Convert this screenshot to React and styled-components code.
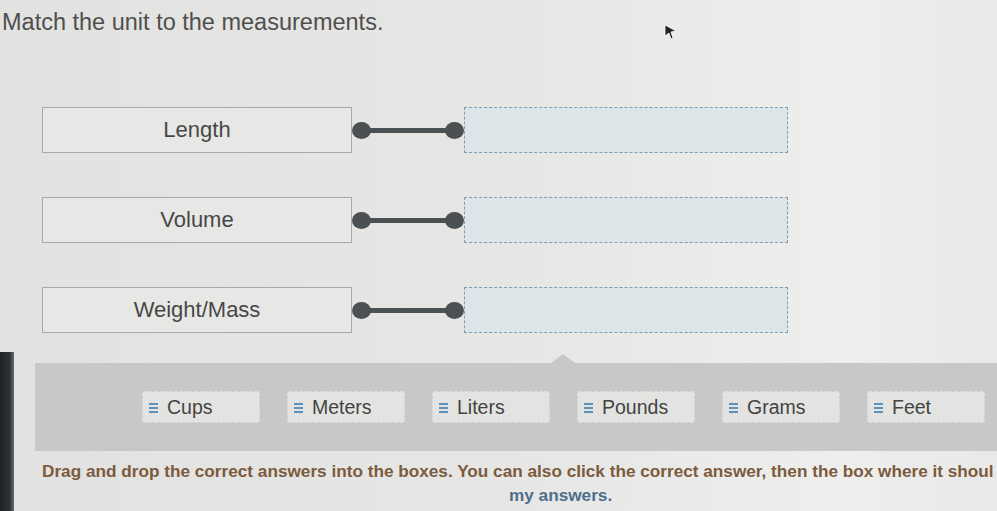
import React from "react";
import styled, { createGlobalStyle } from "styled-components";

const GlobalStyle = createGlobalStyle`
  html, body {
    margin: 0;
    padding: 0;
    width: 997px;
    height: 511px;
    overflow: hidden;
  }
  body {
    background: linear-gradient(90deg, #e2e2e0 0%, #e6e6e4 50%, #eeeeec 85%, #e9e9e7 100%);
    font-family: "Liberation Sans", Arial, sans-serif;
  }
`;

const Page = styled.div`
  position: relative;
  width: 997px;
  height: 511px;
  overflow: hidden;
`;

const Title = styled.h1`
  margin: 0;
  padding: 9px 0 0 2px;
  height: 107px;
  box-sizing: border-box;
  font-size: 23.5px;
  font-weight: normal;
  color: #4f4f4f;
`;

const Rows = styled.div`
  display: flex;
  flex-direction: column;
  gap: 44px;
  padding-left: 42px;
`;

const Row = styled.div`
  display: flex;
  align-items: center;
  height: 46px;
`;

const Term = styled.div`
  width: 310px;
  height: 46px;
  box-sizing: border-box;
  border: 1px solid #a9a9a7;
  background: #e7e7e5;
  display: flex;
  align-items: center;
  justify-content: center;
  font-size: 22px;
  color: #474747;
`;

const Connector = styled.div`
  position: relative;
  width: 112px;
  height: 20px;
  display: flex;
  align-items: center;
  justify-content: space-between;
  &::before {
    content: "";
    position: absolute;
    left: 10px;
    right: 10px;
    top: 8px;
    height: 5px;
    background: #4b5053;
  }
`;

const Dot = styled.span`
  width: 19px;
  height: 17px;
  border-radius: 50%;
  background: #4b5053;
  position: relative;
`;

const Drop = styled.div`
  width: 324px;
  height: 46px;
  box-sizing: border-box;
  border: 1.5px dashed #7f9fae;
  background: #dde5e9;
`;

const Tray = styled.div`
  position: relative;
  margin: 30px 0 0 35px;
  height: 88px;
  background: #c8c8c6;
  display: flex;
  align-items: center;
  gap: 27px;
  padding-left: 107px;
  &::before {
    content: "";
    position: absolute;
    left: 516px;
    top: -9px;
    border-left: 12px solid transparent;
    border-right: 12px solid transparent;
    border-bottom: 9px solid #c8c8c6;
  }
`;

const Chip = styled.div`
  width: 118px;
  height: 32px;
  flex: none;
  box-sizing: border-box;
  background: #e3e3e1;
  border: 1px dashed #d0d0ce;
  display: flex;
  align-items: center;
  padding-left: 6px;
  gap: 9px;
  font-size: 19.5px;
  color: #434343;
  cursor: move;
`;

const Grip = styled.span`
  width: 9px;
  display: flex;
  flex-direction: column;
  gap: 2px;
  margin-top: 2px;
  span {
    height: 2px;
    background: #5a93bf;
  }
`;

const Help = styled.div`
  padding-top: 8px;
  font-size: 17.2px;
  font-weight: bold;
  line-height: 24px;
`;

const HelpLine = styled.div`
  white-space: nowrap;
  color: ${p => p.tone};
  padding-left: ${p => p.indent}px;
`;

const Bezel = styled.div`
  position: absolute;
  left: 0;
  top: 352px;
  bottom: 0;
  width: 14px;
  background: linear-gradient(90deg, #1e2224 0%, #2c3134 70%, #6b6d6e 100%);
`;

const Cursor = styled.svg`
  position: absolute;
  left: 664px;
  top: 24px;
`;

const terms = ["Length", "Volume", "Weight/Mass"];
const units = ["Cups", "Meters", "Liters", "Pounds", "Grams", "Feet"];

export default function App() {
  return (
    <Page>
      <GlobalStyle />
      <Title>Match the unit to the measurements.</Title>
      <Rows>
        {terms.map(t => (
          <Row key={t}>
            <Term>{t}</Term>
            <Connector>
              <Dot />
              <Dot />
            </Connector>
            <Drop />
          </Row>
        ))}
      </Rows>
      <Tray>
        {units.map(u => (
          <Chip key={u}>
            <Grip><span /><span /><span /></Grip>
            {u}
          </Chip>
        ))}
      </Tray>
      <Help>
        <HelpLine tone="#7b5b3e" indent={42}>
          Drag and drop the correct answers into the boxes. You can also click the correct answer, then the box where it shoul
        </HelpLine>
        <HelpLine tone="#4e6f8c" indent={509}>my answers.</HelpLine>
      </Help>
      <Bezel />
      <Cursor width="14" height="16" viewBox="0 0 14 16">
        <path d="M1 1 L12 7 L7 8 L9 14 L7 15 L5 9 L1 12 Z" fill="#222" stroke="#fff" strokeWidth="0.8" />
      </Cursor>
    </Page>
  );
}
